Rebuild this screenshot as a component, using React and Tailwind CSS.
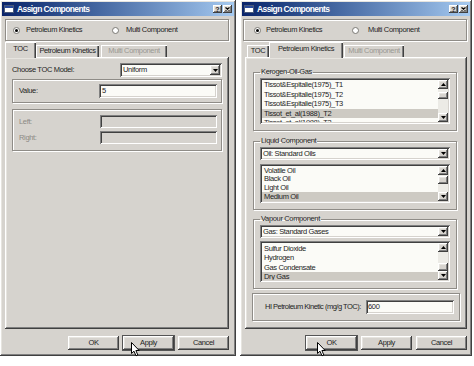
import React from "react";

const FONT = "font-['Liberation_Sans',Arial,sans-serif]";
const RAISED = "shadow-[inset_-1px_-1px_#404040,inset_1px_1px_#ffffff,inset_-2px_-2px_#808080,inset_2px_2px_#e6e4df]";
const SUNKEN = "shadow-[inset_1px_1px_#808080,inset_-1px_-1px_#ffffff,inset_2px_2px_#404040,inset_-2px_-2px_#d6d3ce]";
const ETCHED = "border border-[#8f8c87] shadow-[inset_1px_1px_#ffffff,1px_1px_#ffffff]";
const TAB = "shadow-[inset_1px_1px_#ffffff,inset_-1px_0_#404040,inset_-2px_0_#808080]";

const Tri = ({ up }) => (
  <svg width="5" height="3" viewBox="0 0 5 3">
    <path d={up ? "M2.5 0L5 3H0z" : "M0 0h5L2.5 3z"} fill="#000" />
  </svg>
);

const ScrollBtn = ({ up }) => (
  <div className={`h-[9px] flex items-center justify-center bg-[#d6d3ce] ${RAISED}`}>
    <Tri up={up} />
  </div>
);

const Select = ({ value, className }) => (
  <div className={`flex items-center bg-[#fbfbf7] p-[2px] ${SUNKEN} ${className}`}>
    <span className="flex-1 pl-[1px] whitespace-nowrap">{value}</span>
    <div className={`w-[10px] self-stretch flex items-center justify-center bg-[#d6d3ce] ${RAISED}`}>
      <Tri />
    </div>
  </div>
);

const ListBox = ({ items, selected, className, rowClass, firstClass = "", thumbClass }) => (
  <div className={`flex bg-[#fbfbf7] p-[2px] ${SUNKEN} ${className}`}>
    <div className="flex-1 overflow-hidden">
      {items.map((t, i) => (
        <div
          key={t}
          className={`${rowClass} ${i === 0 ? firstClass : ""} flex items-center pl-[2px] whitespace-nowrap ${
            i === selected ? "bg-[#cdcac3]" : ""
          }`}
        >
          {t}
        </div>
      ))}
    </div>
    <div className="w-[10px] flex flex-col">
      <ScrollBtn up />
      <div className="flex-1 bg-[#ecebe6] flex flex-col">
        <div className={`bg-[#d6d3ce] ${RAISED} ${thumbClass}`} />
      </div>
      <ScrollBtn />
    </div>
  </div>
);

const Group = ({ title, className, children }) => (
  <fieldset className={`${ETCHED} px-[6px] ${className}`}>
    <legend className="px-[1px] leading-[8px] h-[8px]">{title}</legend>
    {children}
  </fieldset>
);

const Radio = ({ on }) => (
  <div className="w-[7px] h-[7px] rounded-full bg-white border border-[#7a7873] flex items-center justify-center">
    {on && <div className="w-[3px] h-[3px] rounded-full bg-black" />}
  </div>
);

const TitleBar = () => (
  <div className="mx-[2px] mt-[2px] h-[14px] flex items-center bg-linear-to-r from-[#0a246a] to-[#a6caf0] px-[2px]">
    <div className="w-[10px] h-[8px] bg-white border border-[#4a5a7a] flex flex-col">
      <div className="h-[2px] bg-[#2a4a9a]" />
    </div>
    <span className="ml-[3px] text-white font-bold text-[8.5px] tracking-[-0.6px]">Assign Components</span>
    <div className="ml-auto flex gap-[1px]">
      <div className={`w-[9px] h-[8px] bg-[#d6d3ce] ${RAISED} flex items-center justify-center text-[7px] font-bold leading-none tracking-normal`}>
        ?
      </div>
      <div className={`w-[9px] h-[8px] bg-[#d6d3ce] ${RAISED} flex items-center justify-center`}>
        <svg width="5" height="4" viewBox="0 0 5 4">
          <path d="M0.5 0.5L4.5 3.5M4.5 0.5L0.5 3.5" stroke="#000" strokeWidth="1.1" />
        </svg>
      </div>
    </div>
  </div>
);

const Button = ({ children, focus }) => (
  <div
    className={`w-[51px] h-[14px] flex items-center justify-center bg-[#d6d3ce] ${RAISED} ${
      focus ? "outline outline-1 outline-[#555]" : ""
    }`}
  >
    {children}
  </div>
);

const Cursor = ({ className }) => (
  <svg className={`absolute ${className}`} width="9" height="15" viewBox="0 0 9 15">
    <path d="M0.5 0.5V11.5L3 9.2L5 13.8L6.8 13L4.9 8.5H8.2Z" fill="#fff" stroke="#000" strokeWidth="1" />
  </svg>
);

const Tabs = ({ tabs, className }) => (
  <div className={`flex items-end h-[15px] mt-[1px] ${className}`}>
    {tabs.map((t) => (
      <div
        key={t.label}
        className={`flex items-center justify-center whitespace-nowrap bg-[#d6d3ce] ${TAB} ${t.w} ${
          t.active ? "h-[16px] -mb-[1px] relative z-10 pb-[2px]" : "h-[12px]"
        } ${t.dim ? "text-[#9a9893]" : ""}`}
      >
        {t.label}
      </div>
    ))}
  </div>
);

const LeftWindow = () => (
  <div className={`relative flex flex-col bg-[#d6d3ce] w-[236px] h-[356px] ${RAISED}`}>
    <TitleBar />
    <div className={`ml-[5px] mt-[3px] w-[224px] h-[22px] ${ETCHED} flex items-center`}>
      <div className="ml-[7px]"><Radio on /></div>
      <span className="ml-[6px] w-[86px]">Petroleum Kinetics</span>
      <Radio />
      <span className="ml-[7px]">Multi Component</span>
    </div>
    <Tabs
      className="ml-[5px]"
      tabs={[
        { label: "TOC", w: "w-[31px]", active: true },
        { label: "Petroleum Kinetics", w: "w-[63px]" },
        { label: "Multi Component", w: "w-[66px] ml-[2px]", dim: true },
      ]}
    />
    <div className={`ml-[5px] w-[224px] h-[272px] ${RAISED} flex flex-col px-[7px]`}>
      <div className="flex items-center mt-[6px]">
        <span>Choose TOC Model:</span>
        <Select value="Uniform" className="ml-auto w-[102px] h-[14px]" />
      </div>
      <div className={`mt-[2px] h-[24px] ${ETCHED} flex items-center pl-[6px]`}>
        <span className="w-[80px]">Value:</span>
        <div className={`w-[118px] h-[14px] bg-[#fbfbf7] ${SUNKEN} flex items-center pl-[3px]`}>5</div>
      </div>
      <div className={`mt-[6px] h-[42px] ${ETCHED} flex flex-col gap-[3px] pt-[5px] pl-[6px]`}>
        <div className="flex items-center text-[#8c8a85]">
          <span className="w-[81px]">Left:</span>
          <div className={`w-[117px] h-[13px] ${SUNKEN}`} />
        </div>
        <div className="flex items-center text-[#8c8a85]">
          <span className="w-[81px]">Right:</span>
          <div className={`w-[117px] h-[13px] ${SUNKEN}`} />
        </div>
      </div>
    </div>
    <div className="flex justify-end gap-[4px] mt-[7px] pr-[7px]">
      <Button>OK</Button>
      <Button focus>Apply</Button>
      <Button>Cancel</Button>
    </div>
  </div>
);

const RightWindow = () => (
  <div className={`relative flex flex-col bg-[#d6d3ce] w-[232px] h-[356px] ml-[4px] ${RAISED}`}>
    <TitleBar />
    <div className={`ml-[3px] mt-[3px] w-[224px] h-[22px] ${ETCHED} flex items-center`}>
      <div className="ml-[10px]"><Radio on /></div>
      <span className="ml-[5px] w-[86px]">Petroleum Kinetics</span>
      <Radio />
      <span className="ml-[9px]">Multi Component</span>
    </div>
    <Tabs
      className="ml-[7px]"
      tabs={[
        { label: "TOC", w: "w-[22px]" },
        { label: "Petroleum Kinetics", w: "w-[74px]", active: true },
        { label: "Multi Component", w: "w-[60px] ml-[1px]", dim: true },
      ]}
    />
    <div className={`ml-[5px] w-[222px] h-[272px] ${RAISED} flex flex-col pl-[8px]`}>
      <Group title="Kerogen-Oil-Gas" className="mt-[11px] w-[204px] pt-[2px] pb-[6px]">
        <ListBox
          className="h-[46px]"
          rowClass="h-[9.6px]"
          selected={3}
          thumbClass="mt-[3px] h-[7px]"
          items={[
            "Tissot&Espitalie(1975)_T1",
            "Tissot&Espitalie(1975)_T2",
            "Tissot&Espitalie(1975)_T3",
            "Tissot_et_al(1988)_T2",
            "Tissot_et_al(1988)_T3",
          ]}
        />
      </Group>
      <Group title="Liquid Component" className="mt-[6px] w-[204px] pt-[2px] pb-[6px]">
        <Select value="Oil: Standard Oils" className="h-[13px]" />
        <ListBox
          className="h-[39px] mt-[4px]"
          rowClass="h-[8.8px]"
          selected={3}
          thumbClass="mt-[1px] h-[8px]"
          items={["Volatile Oil", "Black Oil", "Light Oil", "Medium Oil"]}
        />
      </Group>
      <Group title="Vapour Component" className="mt-[5px] w-[204px] pt-[2px] pb-[6px]">
        <Select value="Gas: Standard Gases" className="h-[13px]" />
        <ListBox
          className="h-[41px] mt-[3px]"
          rowClass="h-[9.3px]"
          firstClass="-mt-[8px]"
          selected={4}
          thumbClass="mt-[11px] h-[8px]"
          items={["Carbon Dioxide", "Sulfur Dioxide", "Hydrogen", "Gas Condensate", "Dry Gas"]}
        />
      </Group>
      <div className={`mt-[4px] -ml-[1px] w-[208px] h-[28px] ${ETCHED} flex items-center pl-[12px]`}>
        <span className="w-[101px] whitespace-nowrap tracking-[-0.5px]">HI Petroleum Kinetic (mg/g TOC):</span>
        <div className={`w-[88px] h-[14px] bg-[#fbfbf7] ${SUNKEN} flex items-center pl-[2px]`}>600</div>
      </div>
    </div>
    <div className="flex justify-end gap-[4px] mt-[7px] pr-[5px]">
      <Button focus>OK</Button>
      <Button>Apply</Button>
      <Button>Cancel</Button>
    </div>
  </div>
);

export default function App() {
  return (
    <div
      className={`relative w-[474px] h-[366px] bg-white flex items-start text-[7.5px] tracking-[-0.35px] leading-none text-[#1e1e1e] ${FONT}`}
    >
      <LeftWindow />
      <RightWindow />
      <Cursor className="left-[131px] top-[342px]" />
      <Cursor className="left-[317px] top-[342px]" />
    </div>
  );
}
